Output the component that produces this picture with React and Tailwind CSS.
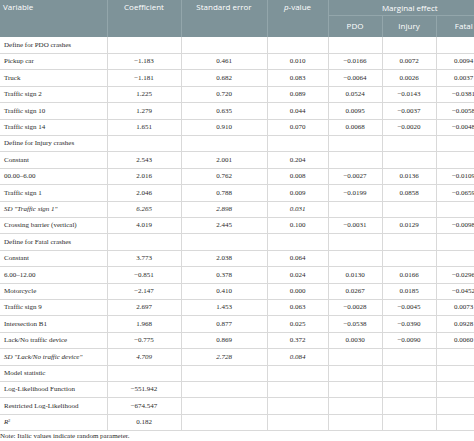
import React from 'react';

const rows = [
    { section: 'Define for PDO crashes' },
    { label: 'Pickup car', v: ['−1.183', '0.461', '0.010', '−0.0166', '0.0072', '0.0094'] },
    { label: 'Truck', v: ['−1.181', '0.682', '0.083', '−0.0064', '0.0026', '0.0037'] },
    { label: 'Traffic sign 2', v: ['1.225', '0.720', '0.089', '0.0524', '−0.0143', '−0.0381'] },
    { label: 'Traffic sign 10', v: ['1.279', '0.635', '0.044', '0.0095', '−0.0037', '−0.0058'] },
    { label: 'Traffic sign 14', v: ['1.651', '0.910', '0.070', '0.0068', '−0.0020', '−0.0048'] },
    { section: 'Define for Injury crashes' },
    { label: 'Constant', v: ['2.543', '2.001', '0.204', '', '', ''] },
    { label: '00.00–6.00', v: ['2.016', '0.762', '0.008', '−0.0027', '0.0136', '−0.0109'] },
    { label: 'Traffic sign 1', v: ['2.046', '0.788', '0.009', '−0.0199', '0.0858', '−0.0659'] },
    { label: 'SD "Traffic sign 1"', v: ['6.265', '2.898', '0.031', '', '', ''], italic: true },
    { label: 'Crossing barrier (vertical)', v: ['4.019', '2.445', '0.100', '−0.0031', '0.0129', '−0.0098'] },
    { section: 'Define for Fatal crashes' },
    { label: 'Constant', v: ['3.773', '2.038', '0.064', '', '', ''] },
    { label: '6.00–12.00', v: ['−0.851', '0.378', '0.024', '0.0130', '0.0166', '−0.0296'] },
    { label: 'Motorcycle', v: ['−2.147', '0.410', '0.000', '0.0267', '0.0185', '−0.0452'] },
    { label: 'Traffic sign 9', v: ['2.697', '1.453', '0.063', '−0.0028', '−0.0045', '0.0073'] },
    { label: 'Intersection B1', v: ['1.968', '0.877', '0.025', '−0.0538', '−0.0390', '0.0928'] },
    { label: 'Lack/No traffic device', v: ['−0.775', '0.869', '0.372', '0.0030', '−0.0090', '0.0060'] },
    { label: 'SD "Lack/No traffic device"', v: ['4.709', '2.728', '0.084', '', '', ''], italic: true },
    { section: 'Model statistic' },
    { label: 'Log-Likelihood Function', v: ['−551.942', '', '', '', '', ''] },
    { label: 'Restricted Log-Likelihood', v: ['−674.547', '', '', '', '', ''] },
    { label: 'R2', v: ['0.182', '', '', '', '', ''] },
];

const Label = ({ text }) => {
    if (text === 'R2') {
        return <span><i>R</i><sup className='text-[4px]'>2</sup></span>;
    }
    return text;
};

const App = () => {
    return (
        <div className='w-[474px] h-[441px] overflow-hidden bg-white'>
            <table className='table-fixed border-collapse w-[491px] font-["Liberation_Serif",serif] text-[7px] text-[#2a2a2a]'>
                <colgroup>
                    <col className='w-[107px]' />
                    <col className='w-[74px]' />
                    <col className='w-[86px]' />
                    <col className='w-[61px]' />
                    <col className='w-[54px]' />
                    <col className='w-[54px]' />
                    <col className='w-[55px]' />
                </colgroup>
                <thead className='bg-[#7e9399] text-white font-["Open_Sans",sans-serif] text-[8px] font-normal'>
                    <tr className='h-[15px]'>
                        <th rowSpan={2} className='align-top text-left font-normal pl-[3px] pt-[1px] leading-[11px] border-r border-[#93a6ab]'>Variable</th>
                        <th rowSpan={2} className='align-top font-normal pt-[1px] leading-[11px] border-r border-[#93a6ab]'>Coefficient</th>
                        <th rowSpan={2} className='align-top font-normal pt-[1px] leading-[11px] border-r border-[#93a6ab]'>Standard error</th>
                        <th rowSpan={2} className='align-top font-normal pt-[1px] leading-[11px] border-r border-[#93a6ab]'><i>p</i>-value</th>
                        <th colSpan={3} className='font-normal leading-[11px] border-b border-[#93a6ab]'>Marginal effect</th>
                    </tr>
                    <tr className='h-[22px]'>
                        <th className='font-normal border-r border-[#93a6ab]'>PDO</th>
                        <th className='font-normal border-r border-[#93a6ab]'>Injury</th>
                        <th className='font-normal'>Fatal</th>
                    </tr>
                </thead>
                <tbody>
                    {rows.map((row, i) => (
                        <tr key={i} className='h-[16.42px] border-b border-[#d9d9d9]'>
                            {row.section ? (
                                <>
                                    <td className='pl-[4px] border-r border-[#d9d9d9]'>{row.section}</td>
                                    {[0, 1, 2, 3, 4, 5].map((j) => (
                                        <td key={j} className='border-r border-[#d9d9d9]'></td>
                                    ))}
                                </>
                            ) : (
                                <>
                                    <td className={`pl-[4px] border-r border-[#d9d9d9] ${row.italic ? 'italic' : ''}`}>
                                        <Label text={row.label} />
                                    </td>
                                    {row.v.map((val, j) => (
                                        <td key={j} className={`text-center border-r border-[#d9d9d9] ${row.italic ? 'italic' : ''}`}>{val}</td>
                                    ))}
                                </>
                            )}
                        </tr>
                    ))}
                </tbody>
            </table>
            <p className='font-["Liberation_Serif",serif] text-[7px] text-[#2a2a2a] mt-[1px] leading-[9px]'>Note: Italic values indicate random parameter.</p>
        </div>
    );
};

export default App;
